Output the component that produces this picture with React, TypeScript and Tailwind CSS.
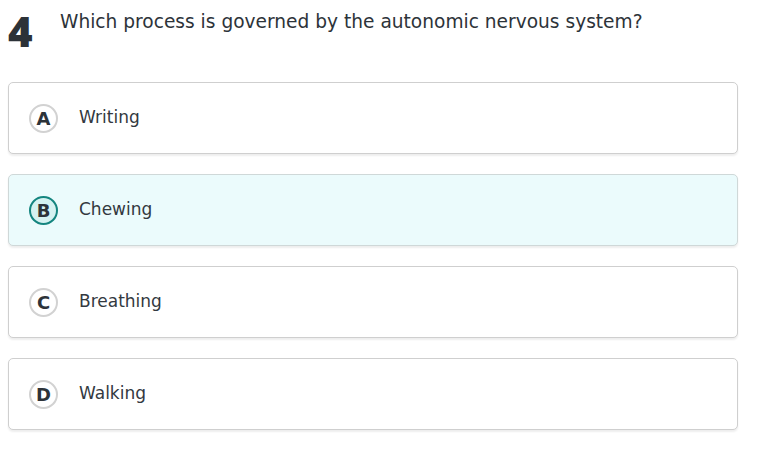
const options = [
  { letter: "A", label: "Writing" },
  { letter: "B", label: "Chewing", selected: true },
  { letter: "C", label: "Breathing" },
  { letter: "D", label: "Walking" },
];

export default function App() {
  return (
    <div className="min-h-screen w-[780px] bg-white font-['DejaVu_Sans',sans-serif] text-[#2d3339]">
      <div className="flex items-start pl-[8px]">
        <span className="w-[52px] shrink-0 pt-[10px] font-['Open_Sans',sans-serif] text-[42px] leading-none font-extrabold text-[#2c3238]">
          4
        </span>
        <h1 className="pt-[9px] text-[18.6px] leading-[26px] text-[#2d3339]">
          Which process is governed by the autonomic nervous system?
        </h1>
      </div>

      <div className="mt-[30px] flex w-[730px] flex-col gap-[20px] pl-[8px]">
        {options.map((o) => (
          <div
            key={o.letter}
            className={`flex h-[72px] w-[730px] items-center gap-[21px] rounded-[5px] border px-[20px] shadow-[0_2px_2px_rgba(0,0,0,0.07)] ${
              o.selected ? "border-[#cfd8d8] bg-[#ebfbfc]" : "border-[#cfcfcf] bg-white"
            }`}
          >
            <span
              className={`flex h-[29px] w-[29px] items-center justify-center rounded-full border-2 text-[18px] font-bold ${
                o.selected ? "border-[#14857f] bg-[#d5f2f1]" : "border-[#d2d2d2] bg-white"
              }`}
            >
              {o.letter}
            </span>
            <span className="text-[17px] text-[#33393f]">{o.label}</span>
          </div>
        ))}
      </div>
    </div>
  );
}
